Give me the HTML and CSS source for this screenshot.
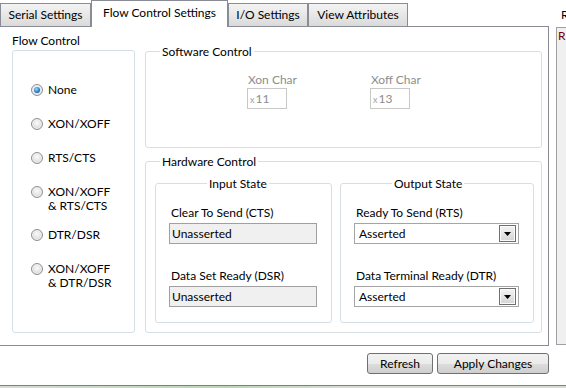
FILE: index.html
```html
<!DOCTYPE html>
<html>
<head>
    <title>Serial Port Settings</title>
    <meta charset="UTF-8">
    <link rel="stylesheet" href="styles.css">
</head>
<body>
    <div class="window">
        <div class="main">
            <div class="tabs">
                <div class="tab tab-serial">Serial Settings</div>
                <div class="tab tab-flow active">Flow Control Settings</div>
                <div class="tab tab-io">I/O Settings</div>
                <div class="tab tab-attr">View Attributes</div>
            </div>

            <div class="tab-panel">
                <div class="flow-col">
                    <div class="flow-title">Flow Control</div>
                    <div class="flow-box">
                        <div class="option"><span class="radio checked"></span><span>None</span></div>
                        <div class="option"><span class="radio"></span><span>XON/XOFF</span></div>
                        <div class="option"><span class="radio"></span><span>RTS/CTS</span></div>
                        <div class="option two-line"><span class="radio"></span><span>XON/XOFF<br>&amp; RTS/CTS</span></div>
                        <div class="option"><span class="radio"></span><span>DTR/DSR</span></div>
                        <div class="option two-line"><span class="radio"></span><span>XON/XOFF<br>&amp; DTR/DSR</span></div>
                    </div>
                </div>

                <div class="right-col">
                    <fieldset class="group software">
                        <legend>Software Control</legend>
                        <div class="char-fields">
                            <div class="char-field">
                                <div class="char-label">Xon Char</div>
                                <div class="char-input"><span class="radix">x</span>11</div>
                            </div>
                            <div class="char-field">
                                <div class="char-label">Xoff Char</div>
                                <div class="char-input"><span class="radix">x</span>13</div>
                            </div>
                        </div>
                    </fieldset>

                    <fieldset class="group hardware">
                        <legend>Hardware Control</legend>
                        <div class="states">
                            <fieldset class="state input-state">
                                <legend>Input State</legend>
                                <div class="state-label">Clear To Send (CTS)</div>
                                <div class="indicator">Unasserted</div>
                                <div class="state-label second">Data Set Ready (DSR)</div>
                                <div class="indicator">Unasserted</div>
                            </fieldset>
                            <fieldset class="state output-state">
                                <legend>Output State</legend>
                                <div class="state-label">Ready To Send (RTS)</div>
                                <div class="ring">
                                    <span>Asserted</span>
                                    <span class="ring-btn"><svg width="7" height="4" viewBox="0 0 7 4"><polygon points="0,0 7,0 3.5,4" fill="#000"/></svg></span>
                                </div>
                                <div class="state-label second">Data Terminal Ready (DTR)</div>
                                <div class="ring">
                                    <span>Asserted</span>
                                    <span class="ring-btn"><svg width="7" height="4" viewBox="0 0 7 4"><polygon points="0,0 7,0 3.5,4" fill="#000"/></svg></span>
                                </div>
                            </fieldset>
                        </div>
                    </fieldset>
                </div>
            </div>

            <div class="actions">
                <button class="btn btn-refresh">Refresh</button>
                <button class="btn btn-apply">Apply Changes</button>
            </div>
        </div>

        <div class="side">
            <div class="side-title">R</div>
            <div class="side-box">R</div>
        </div>
    </div>
    <div class="statusbar"></div>
</body>
</html>
```

FILE: styles.css
```css
:root {
    --tab-border: #898c95;
    --group-border: #d5dfe5;
    --disabled-text: #8d8d8d;
    --field-border: #a0a0a0;
}

* {
    box-sizing: border-box;
}

body {
    margin: 0;
    width: 566px;
    height: 388px;
    overflow: hidden;
    background: #fff;
    color: #000;
    font-family: Lato, 'Liberation Sans', sans-serif;
    font-size: 12px;
    line-height: 15px;
}

.window {
    display: flex;
}

.main {
    width: 549px;
    flex: none;
}

/* tabs */
.tabs {
    display: flex;
    align-items: flex-end;
    height: 26px;
}

.tab {
    height: 23px;
    border: 1px solid var(--tab-border);
    border-bottom: none;
    background: linear-gradient(#f4f4f4, #dadada);
    text-align: center;
    line-height: 22px;
    white-space: nowrap;
}

.tab-serial { width: 91px; }
.tab-flow { width: 137px; }
.tab-io { width: 80px; }
.tab-attr { width: 100px; }

.tab.active {
    height: 27px;
    margin-bottom: -1px;
    background: #fff;
    line-height: 24px;
    position: relative;
    z-index: 1;
}

.tab-panel {
    display: flex;
    height: 320px;
    padding: 6px 0 0 12px;
    border: 1px solid var(--tab-border);
    border-left: none;
}

/* flow control radios */
.flow-title {
    margin-bottom: 2px;
}

.flow-box {
    display: flex;
    flex-direction: column;
    gap: 20px;
    width: 123px;
    height: 283px;
    padding: 32px 0 0 18px;
    border: 1px solid var(--group-border);
    border-radius: 3px;
}

.option {
    display: flex;
    align-items: flex-start;
    gap: 5px;
    line-height: 14px;
}

.option.two-line {
    margin-bottom: -5px;
}

.radio {
    display: flex;
    align-items: center;
    justify-content: center;
    flex: none;
    width: 12px;
    height: 12px;
    margin-top: 1px;
    border: 1px solid #8f8f8f;
    border-radius: 50%;
    background: radial-gradient(circle at 50% 40%, #fbfbfb 0%, #e2e2e2 55%, #c6c6c6 100%);
    box-shadow: inset 0 0 0 1px #f2f2f2;
}

.radio.checked::after {
    content: '';
    width: 6px;
    height: 6px;
    border-radius: 50%;
    background: radial-gradient(circle at 40% 35%, #9fdcff 0%, #2a7fcf 55%, #0e3f78 100%);
}

/* group boxes */
.right-col {
    width: 397px;
    margin: 11px 0 0 10px;
}

fieldset {
    margin: 0;
    padding: 0;
    min-width: 0;
    border: 1px solid var(--group-border);
    border-radius: 3px;
}

legend {
    padding: 0 2px;
    line-height: 15px;
}

.group > legend {
    margin-left: 14px;
}

.software {
    height: 104px;
}

.char-fields {
    display: grid;
    grid-template-columns: 123px auto;
    padding: 13px 0 0 101px;
}

.char-label {
    padding-left: 1px;
    color: var(--disabled-text);
}

.char-input {
    width: 40px;
    height: 21px;
    margin-top: 1px;
    padding-left: 2px;
    border: 1px solid #c8c8c8;
    color: var(--disabled-text);
    line-height: 19px;
}

.radix {
    margin-right: 1px;
    font-size: 9px;
    color: #a0a0a0;
}

.hardware {
    height: 179px;
    margin-top: 6px;
}

.states {
    display: flex;
    gap: 8px;
    padding: 7px 7px 0 9px;
}

.state {
    padding: 14px 13px 15px 13px;
}

.state > legend {
    margin-left: 38px;
}

.input-state { width: 177px; }
.output-state { width: 194px; }

.state-label {
    padding-left: 2px;
    white-space: nowrap;
}

.state-label.second {
    margin-top: 24px;
}

.indicator {
    width: 148px;
    height: 21px;
    margin-top: 3px;
    padding-left: 2px;
    border: 1px solid var(--field-border);
    background: #f0f0f0;
    line-height: 19px;
}

.ring {
    display: flex;
    align-items: center;
    justify-content: space-between;
    width: 165px;
    height: 21px;
    margin-top: 3px;
    padding: 0 2px 0 4px;
    border: 1px solid #a5a5a5;
    background: #fff;
}

.ring-btn {
    display: flex;
    align-items: center;
    justify-content: center;
    width: 17px;
    height: 17px;
    border: 1px solid #6f6f6f;
    background: linear-gradient(#f4f4f4, #d4d4d4);
    box-shadow: inset 0 0 0 1px #fafafa;
}

/* buttons */
.actions {
    display: flex;
    justify-content: flex-end;
    gap: 4px;
    padding-top: 7px;
}

.btn {
    height: 21px;
    padding: 0;
    border: 1px solid #707070;
    border-radius: 3px;
    background: linear-gradient(#f2f2f2 0%, #ebebeb 50%, #dddddd 51%, #cfcfcf 100%);
    color: #000;
    font-family: inherit;
    font-size: 12px;
    line-height: 19px;
}

.btn-refresh { width: 66px; }
.btn-apply { width: 112px; }

/* right side cut-off panel */
.side {
    flex: 1;
    margin-left: 7px;
    overflow: hidden;
}

.side-title {
    padding: 7px 0 0 5px;
}

.side-box {
    height: 318px;
    margin-top: 5px;
    padding-left: 1px;
    border: 1px solid var(--field-border);
    border-right: none;
    background: #f0f0f0;
    color: #7a0000;
}

.statusbar {
    height: 3px;
    margin-top: 11px;
    border-top: 1px solid #7f7f7f;
    background: linear-gradient(90deg, #d6dcd4, #b9d8b2 40%, #d6dcd4 60%);
}
```
